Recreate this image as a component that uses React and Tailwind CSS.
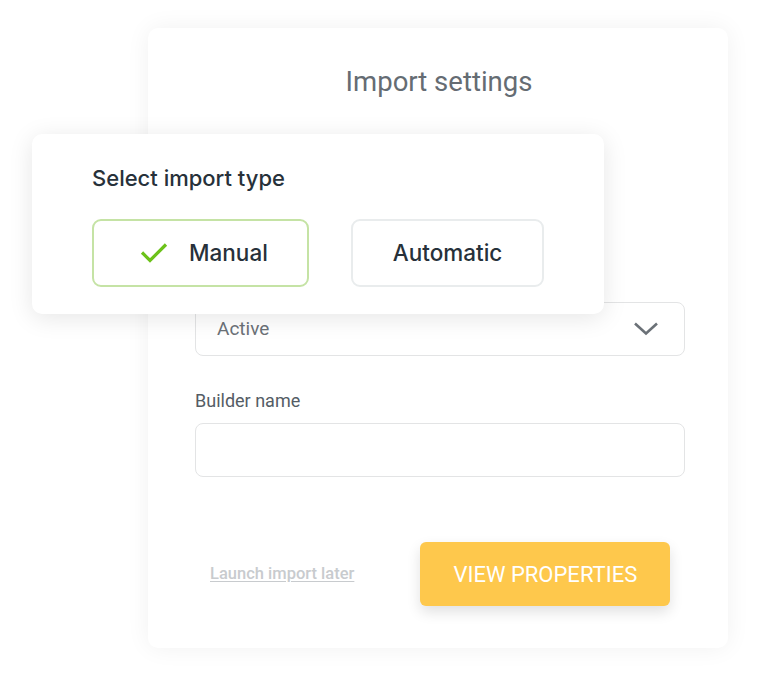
export default function App() {
  return (
    <div className="relative w-[760px] h-[684px] bg-white overflow-hidden font-['Roboto',sans-serif]">
      {/* settings card */}
      <div className="ml-[148px] mt-[28px] w-[580px] h-[620px] bg-white rounded-[10px] shadow-[0_0_24px_rgba(0,0,0,0.06)] pl-[47px] pr-[43px] pt-[37px]">
        <h1 className="text-center text-[27.5px] leading-[34px] text-[#656c73] -ml-[2px]">Import settings</h1>

        <div className="mt-[203px] h-[54px] rounded-[8px] border border-[#e3e4e5] flex items-center justify-between pl-[21px] pr-[25px]">
          <span className="text-[19px] text-[#6b7177]">Active</span>
          <svg width="26" height="16" viewBox="0 0 26 16" fill="none">
            <path d="M2 2.5 L13 12.5 L24 2.5" stroke="#6b7177" strokeWidth="2.6" />
          </svg>
        </div>

        <label className="block mt-[34px] text-[18px] leading-[22px] text-[#545c65]">Builder name</label>
        <div className="mt-[11px] h-[54px] rounded-[8px] border border-[#e3e4e5]"></div>

        <div className="mt-[65px] flex items-center">
          <a className="ml-[15px] text-[16.5px] font-medium text-[#c8cbce] underline underline-offset-2">Launch import later</a>
          <button className="ml-[66px] w-[250px] h-[64px] rounded-[6px] bg-[#fec84c] text-white text-[22px] shadow-[0_6px_14px_rgba(0,0,0,0.12)]">VIEW PROPERTIES</button>
        </div>
      </div>

      {/* import type popover */}
      <div className="absolute left-[32px] top-[134px] w-[572px] h-[180px] bg-white rounded-[10px] shadow-[0_4px_24px_rgba(0,0,0,0.1)] pl-[60px] pt-[30px] font-['Inter',sans-serif]">
        <h2 className="text-[22px] leading-[28px] font-medium text-[#27313a]">Select import type</h2>
        <div className="mt-[27px] flex gap-[42px]">
          <button className="w-[217px] h-[68px] rounded-[9px] border-2 border-[#c5e3a5] flex items-center pl-[46px] gap-[19px] text-[22.5px] font-medium text-[#27313a]">
            <svg width="30" height="22" viewBox="0 0 30 22" fill="none">
              <path d="M2 10.5 L10 18.5 L26 2.5" stroke="#6cc21a" strokeWidth="3.2" />
            </svg>
            Manual
          </button>
          <button className="w-[193px] h-[68px] rounded-[9px] border-2 border-[#e9eced] flex items-center justify-center text-[22.5px] font-medium text-[#27313a]">
            Automatic
          </button>
        </div>
      </div>
    </div>
  );
}
